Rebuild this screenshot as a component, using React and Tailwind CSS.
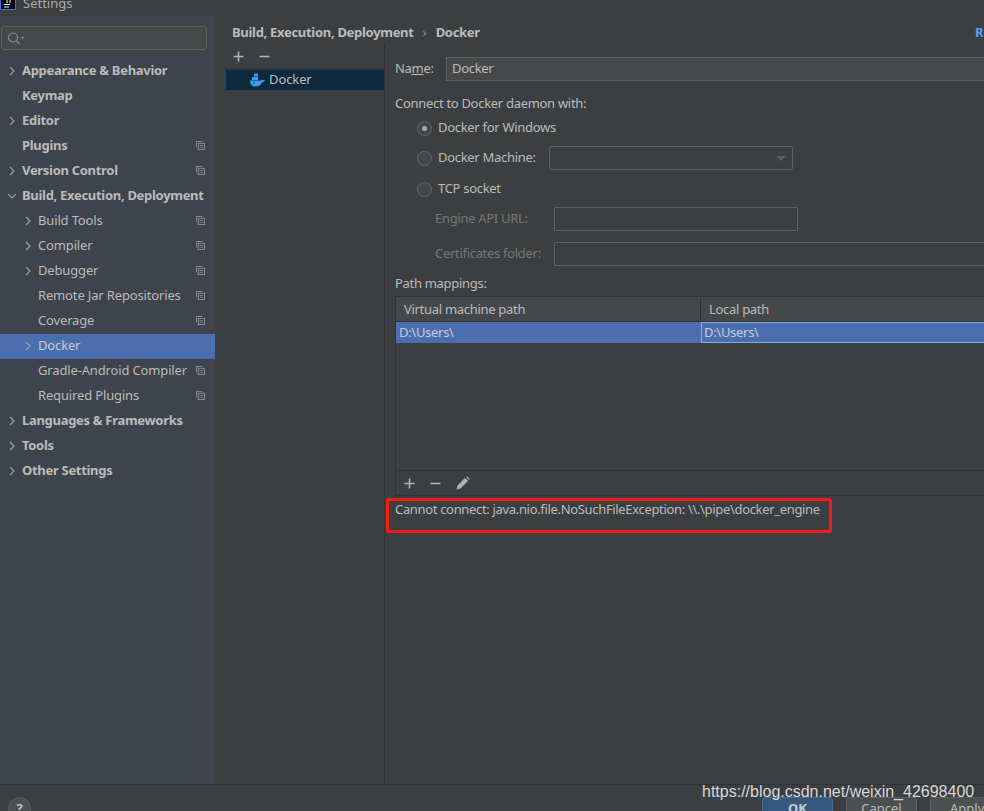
import React from "react";

const font = { fontFamily: '"Noto Sans", "Open Sans", sans-serif' };

function Chevron({ open, className = "" }) {
  return (
    <svg width="8" height="10" viewBox="0 0 8 10" className={className} fill="none" stroke="#9ba0a6" strokeWidth="1.2">
      {open ? <path d="M0 3 L4 7 L8 3" /> : <path d="M2 1 L6 5 L2 9" />}
    </svg>
  );
}

function CopyIcon() {
  return (
    <svg width="9" height="9" viewBox="0 0 10 10" fill="none" stroke="#8f949a" strokeWidth="1">
      <path d="M0.5 7 V0.5 H7" />
      <rect x="2.5" y="2.5" width="7" height="7" />
      <path d="M4 5 H8 M4 7 H8" strokeWidth="0.8" />
    </svg>
  );
}

function DockerIcon() {
  return (
    <svg width="15" height="14" viewBox="0 0 15 14">
      <rect x="4" y="0.5" width="4" height="3" fill="#3d9be9" />
      <rect x="2" y="4" width="6" height="3" fill="#3d9be9" />
      <path d="M0 7.5 H11.5 C12 6.5 13 6.5 15 7.5 C14 9 13 9.2 12 9.5 C10.5 12.5 8 13.5 5 13.5 C2 13.5 0 11 0 7.5 Z" fill="#3d9be9" />
      <circle cx="4" cy="10" r="0.7" fill="#0d293e" />
    </svg>
  );
}

function Plus() {
  return (
    <svg width="11" height="11" viewBox="0 0 11 11" stroke="#afb1b3" strokeWidth="1.6">
      <path d="M5.5 0.5 V10.5 M0.5 5.5 H10.5" />
    </svg>
  );
}

function Minus() {
  return (
    <svg width="11" height="11" viewBox="0 0 11 11" stroke="#afb1b3" strokeWidth="1.6">
      <path d="M0.5 5.5 H10.5" />
    </svg>
  );
}

function Pencil() {
  return (
    <svg width="14" height="14" viewBox="0 0 14 14">
      <path d="M0.5 13.5 L1.5 9.5 L9 2 L12 5 L4.5 12.5 Z" fill="#afb1b3" />
      <path d="M10 1 L11 0.3 L13.7 3 L13 4 Z" fill="#afb1b3" />
    </svg>
  );
}

function AppIcon() {
  return (
    <svg width="16" height="10" viewBox="0 0 16 10" className="shrink-0">
      <rect x="0" y="0" width="16" height="10" fill="#3574f0" />
      <rect x="1" y="0" width="14" height="9" fill="#000000" />
      <path d="M4 4.5 H10 M4 7 H9" stroke="#ffffff" strokeWidth="1" />
      <path d="M7 0 V3 M10 0 V3" stroke="#ffffff" strokeWidth="1" />
    </svg>
  );
}

function SideRow({ label, level = 0, chevron, open, copy, selected, bold }) {
  return (
    <div className={`flex items-center h-[25px] pb-[2px] pr-[10px] ${selected ? "bg-[#4b6eaf]" : ""} ${level ? "pl-[24px]" : "pl-[8px]"}`}>
      <div className="w-[14px] shrink-0 flex items-center">{chevron && <Chevron open={open} />}</div>
      <span className={`flex-1 whitespace-nowrap text-[13px] ${bold ? "font-bold tracking-[-0.3px]" : "tracking-[-0.15px]"} ${selected ? "text-[#c8ccd2]" : "text-[#bbbbbb]"}`}>{label}</span>
      {copy && <CopyIcon />}
    </div>
  );
}

function Radio({ checked }) {
  return (
    <div className="w-[15px] h-[15px] rounded-full border border-[#666a6d] bg-[#43474a] flex items-center justify-center shrink-0">
      {checked && <div className="w-[5px] h-[5px] rounded-full bg-[#a8abad]" />}
    </div>
  );
}

const sideItems = [
  { label: "Appearance & Behavior", chevron: true, bold: true },
  { label: "Keymap", bold: true },
  { label: "Editor", chevron: true, bold: true },
  { label: "Plugins", bold: true, copy: true },
  { label: "Version Control", chevron: true, bold: true, copy: true },
  { label: "Build, Execution, Deployment", chevron: true, open: true, bold: true },
  { label: "Build Tools", level: 1, chevron: true, copy: true },
  { label: "Compiler", level: 1, chevron: true, copy: true },
  { label: "Debugger", level: 1, chevron: true, copy: true },
  { label: "Remote Jar Repositories", level: 1, copy: true },
  { label: "Coverage", level: 1, copy: true },
  { label: "Docker", level: 1, chevron: true, selected: true },
  { label: "Gradle-Android Compiler", level: 1, copy: true },
  { label: "Required Plugins", level: 1, copy: true },
  { label: "Languages & Frameworks", chevron: true, bold: true },
  { label: "Tools", chevron: true, bold: true },
  { label: "Other Settings", chevron: true, bold: true },
];

export default function App() {
  return (
    <div className="relative w-[984px] h-[811px] overflow-hidden bg-[#3c3f41] text-[13px] text-[#bbbbbb]" style={font}>
      {/* Title bar */}
      <div className="h-[16px] flex items-start overflow-hidden">
        <AppIcon />
        <span className="ml-[7px] -mt-[6px] text-[13px] leading-[18px] text-[#a9abad]">Settings</span>
      </div>

      <div className="flex h-[768px]">
        {/* Sidebar */}
        <aside className="w-[215px] shrink-0 bg-[#3e434c] flex flex-col">
          <div className="mt-[10px] ml-[1px] w-[206px] h-[24px] rounded-[3px] border border-[#5e6060] bg-[#45494a] flex items-center pl-[5px] text-[#8f9295]">
            <svg width="18" height="13" viewBox="0 0 18 13" fill="none" stroke="#8f9295" strokeWidth="1.1">
              <circle cx="6" cy="5.5" r="4.5" />
              <path d="M9.5 9 L12.5 12" />
              <path d="M13.5 5 H17.5 L15.5 7 Z" fill="#8f9295" stroke="none" />
            </svg>
          </div>
          <div className="mt-[9px]">
            {sideItems.map((it) => (
              <SideRow key={it.label} {...it} />
            ))}
          </div>
        </aside>

        {/* Main */}
        <main className="flex-1 min-w-0 flex flex-col">
          <div className="h-[28px] flex items-center pl-[17px] shrink-0 pt-[6px]">
            <span className="font-bold whitespace-nowrap tracking-[-0.3px]">Build, Execution, Deployment</span>
            <span className="mx-[9px] text-[#8f9295]">›</span>
            <span className="font-bold tracking-[-0.3px]">Docker</span>
            <span className="ml-auto w-[9px] overflow-hidden font-bold text-[#589df6]">Reset</span>
          </div>

          <div className="flex flex-1 min-h-0">
            {/* List column */}
            <div className="w-[170px] shrink-0 flex flex-col border-r border-[#323232]">
              <div className="h-[26px] flex items-center gap-[15px] pl-[18px] pb-[2px]">
                <Plus />
                <Minus />
              </div>
              <div className="ml-[11px] h-[20px] bg-[#0d293e] flex items-center pl-[24px] gap-[4px] text-[#bbbbbb] shadow-[0_-2px_0_#333638]">
                <DockerIcon />
                <span className="tracking-[-0.1px]">Docker</span>
              </div>
            </div>

            {/* Form */}
            <div className="w-[700px] shrink-0 pl-[10px] flex flex-col tracking-[-0.3px]">
              <div className="flex items-center h-[24px] mt-[13px]">
                <span className="w-[51px]">Na<span className="underline">m</span>e:</span>
                <div className="w-[560px] h-[24px] border border-[#5e6060] bg-[#45494a] flex items-center pl-[5px]">Docker</div>
              </div>
              <div className="mt-[12px] h-[20px] leading-[20px]">Connect to Docker daemon with:</div>
              <div className="ml-[22px] mt-[5px] h-[20px] flex items-center gap-[6px]">
                <Radio checked />
                <span>Docker for Windows</span>
              </div>
              <div className="ml-[22px] mt-[8px] h-[24px] flex items-center gap-[6px]">
                <Radio />
                <span className="w-[105px]">Docker Machine:</span>
                <div className="w-[244px] h-[24px] rounded-[2px] border border-[#5e6060] bg-[#3c3f41] flex items-center justify-end pr-[6px]">
                  <div className="w-0 h-0 border-l-[5px] border-r-[5px] border-t-[5px] border-l-transparent border-r-transparent border-t-[#5e6060]" />
                </div>
              </div>
              <div className="ml-[22px] mt-[9px] h-[20px] flex items-center gap-[6px]">
                <Radio />
                <span>TCP socket</span>
              </div>
              <div className="ml-[40px] mt-[8px] h-[24px] flex items-center text-[#777777]">
                <span className="w-[119px]">Engine API URL:</span>
                <div className="w-[244px] h-[24px] border border-[#5e6060]" />
              </div>
              <div className="ml-[40px] mt-[11px] h-[24px] flex items-center text-[#777777]">
                <span className="w-[119px] whitespace-nowrap">Certificates folder:</span>
                <div className="w-[500px] h-[24px] border border-[#5e6060]" />
              </div>
              <div className="mt-[7px] h-[20px] leading-[20px]">Path mappings:</div>

              {/* Table */}
              <div className="mt-[3px] h-[200px] border border-[#323232] flex flex-col">
                <div className="h-[25px] flex bg-[#45484a] border-b border-[#323232] shrink-0 pt-[1px]">
                  <div className="w-[305px] pl-[8px] flex items-center border-r border-[#323232]">Virtual machine path</div>
                  <div className="flex-1 pl-[8px] flex items-center">Local path</div>
                </div>
                <div className="h-[21px] flex bg-[#4b6eaf] text-[#c8ccd2] shrink-0">
                  <div className="w-[305px] pl-[3px] flex items-center">D:\Users\</div>
                  <div className="flex-1 pl-[2px] flex items-center border border-[#6fb4ea]">D:\Users\</div>
                </div>
                <div className="flex-1" />
                <div className="h-[25px] border-t border-[#323232] flex items-center pl-[8px] gap-[15px] shrink-0">
                  <Plus />
                  <Minus />
                  <Pencil />
                </div>
              </div>

              <div className="mt-[3px] h-[20px] leading-[20px] whitespace-nowrap tracking-[-0.33px]">Cannot connect: java.nio.file.NoSuchFileException: \\.\pipe\docker_engine</div>
            </div>
          </div>
        </main>
      </div>

      {/* Bottom bar */}
      <div className="h-[27px] border-t border-[#323232] flex items-start">
        <div className="mt-[12px] ml-[8px] w-[23px] h-[23px] rounded-full bg-[#4c5052] border border-[#5e6060] flex justify-center text-[13px] font-bold leading-[20px]">?</div>
        <div className="ml-auto mt-[12px] flex gap-[13px]">
          <div className="w-[71px] h-[24px] rounded-[3px] bg-[#365880] border border-[#4c708c] text-center font-bold leading-[20px] text-[#c8ccd2]">OK</div>
          <div className="w-[71px] h-[24px] rounded-[3px] bg-[#4c5052] border border-[#5e6060] text-center leading-[20px]">Cancel</div>
          <div className="w-[54px] h-[24px] rounded-l-[3px] bg-[#4c5052] border border-r-0 border-[#5e6060] pl-[19px] leading-[20px] overflow-hidden">Apply</div>
        </div>
      </div>

      {/* Red annotation */}
      <div className="absolute left-[386px] top-[498px] w-[446px] h-[35px] border-[3px] border-[#f51b14] rounded-[3px]" />
      {/* Watermark */}
      <div className="absolute left-[702px] top-[782px] text-[16px] leading-[20px] text-[#d5d8da] whitespace-nowrap" style={{ fontFamily: '"Liberation Sans", sans-serif' }}>
        https://blog.csdn.net/weixin_42698400
      </div>
    </div>
  );
}
